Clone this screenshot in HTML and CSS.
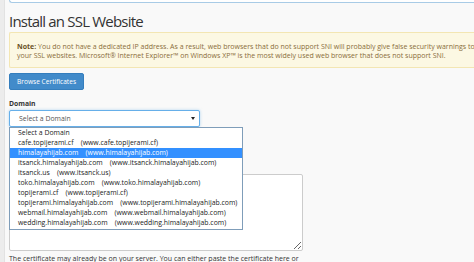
FILE: index.html
```
<!DOCTYPE html>
<html>
<head>
    <title>Install an SSL Website</title>
    <meta name="viewport" content="width=device-width, initial-scale=1.0">
    <link rel="stylesheet" href="styles.css">
</head>
<body>
    <div class="sidebar"></div>

    <div class="main">
        <div class="search-box"></div>

        <h1>Install an SSL Website</h1>

        <div class="note">
            <b>Note:</b> You do not have a dedicated IP address. As a result, web browsers that do not support SNI will probably give false security warnings to<br>
            your SSL websites. Microsoft® Internet Explorer™ on Windows XP™ is the most widely used web browser that does not support SNI.
        </div>

        <button class="btn-primary">Browse Certificates</button>

        <label class="field-label">Domain</label>
        <div class="select-wrap">
            <div class="select-box">
                <span>Select a Domain</span>
                <span class="caret"></span>
            </div>

            <!-- 打开的下拉列表 -->
            <ul class="dropdown">
                <li>Select a Domain</li>
                <li>cafe.topijerami.cf    (www.cafe.topijerami.cf)</li>
                <li class="active">himalayahijab.com    (www.himalayahijab.com)</li>
                <li>itsanck.himalayahijab.com    (www.itsanck.himalayahijab.com)</li>
                <li>itsanck.us    (www.itsanck.us)</li>
                <li>toko.himalayahijab.com    (www.toko.himalayahijab.com)</li>
                <li>topijerami.cf    (www.topijerami.cf)</li>
                <li>topijerami.himalayahijab.com    (www.topijerami.himalayahijab.com)</li>
                <li>webmail.himalayahijab.com    (www.webmail.himalayahijab.com)</li>
                <li>wedding.himalayahijab.com    (www.wedding.himalayahijab.com)</li>
            </ul>
        </div>

        <textarea class="cert-input"></textarea>

        <p class="help-text">The certificate may already be on your server. You can either paste the certificate here or</p>
    </div>
</body>
</html>
```

FILE: styles.css
```
/* 基础样式 */
body {
    font-family: "Open Sans", "Liberation Sans", sans-serif;
    color: #333;
    margin: 0;
    padding: 0;
    background-color: #f9f9f9;
    display: flex;
    height: 262px;
    overflow: hidden;
}

.sidebar {
    width: 4px;
    flex-shrink: 0;
    background-color: #ececec;
    border-right: 1px solid #e2e2e2;
}

.main {
    flex: 1;
    padding-left: 4px;
    min-width: 0;
    overflow: hidden;
}

.search-box {
    height: 2px;
    background: #fff;
    border: 1px solid #a8cbe6;
    border-top: none;
    border-right: none;
    border-radius: 0 0 0 3px;
}

h1 {
    font-size: 15px;
    font-weight: normal;
    letter-spacing: -0.8px;
    line-height: 20px;
    margin: 8px 0 1px;
    color: #333;
}

.note {
    background: #fcf8e3;
    border: 1px solid #f3e6b3;
    border-right: none;
    border-radius: 2px 0 0 2px;
    color: #8a6d3b;
    font-size: 7px;
    line-height: 9px;
    padding: 9px 7px 7px;
    white-space: nowrap;
    overflow: hidden;
}

.note b {
    color: #6b5228;
}

.btn-primary {
    display: block;
    margin-top: 5px;
    height: 17px;
    padding: 0 7px;
    background: #428bca;
    border: 1px solid #357ebd;
    border-radius: 2px;
    color: #fff;
    font-family: inherit;
    font-size: 6.6px;
}

.field-label {
    display: block;
    font-size: 6.8px;
    font-weight: bold;
    line-height: 9px;
    margin-top: 9px;
    margin-bottom: 2px;
}

.select-wrap {
    position: relative;
    width: 191px;
}

.select-box {
    height: 15px;
    border: 1px solid #66afe9;
    border-radius: 2px;
    background: #fff;
    box-shadow: 0 0 3px rgba(102, 175, 233, 0.5);
    display: flex;
    align-items: center;
    justify-content: space-between;
    padding: 0 4px 0 9px;
    font-size: 6.9px;
    color: #555;
}

.caret {
    border-left: 2px solid transparent;
    border-right: 2px solid transparent;
    border-top: 3px solid #222;
}

.dropdown {
    position: absolute;
    top: 100%;
    left: 0;
    width: 232px;
    margin: 0;
    padding: 0 0 1px;
    list-style: none;
    background: #fff;
    border: 1px solid #7f9db9;
    z-index: 10;
}

.dropdown li {
    height: 10px;
    line-height: 10px;
    padding-left: 8px;
    font-size: 6.9px;
    color: #222;
    white-space: pre;
}

.dropdown li.active {
    background: #3390ff;
    color: #fff;
}

.cert-input {
    display: block;
    box-sizing: border-box;
    width: 294px;
    height: 77px;
    margin: 47px 0 0;
    border: 1px solid #ccc;
    border-radius: 2px;
    background: #fff;
}

.help-text {
    font-size: 7px;
    line-height: 9px;
    margin: 3px 0 0;
    white-space: nowrap;
}
```
